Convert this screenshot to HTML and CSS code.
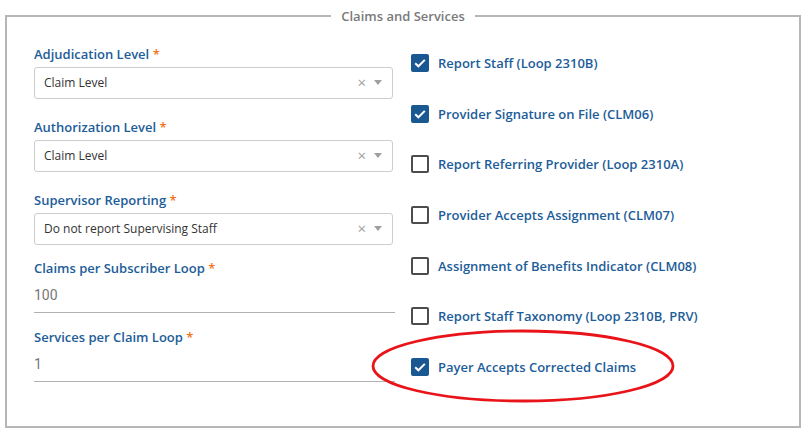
FILE: index.html
```html
<!DOCTYPE html>
<html lang="en">
<head>
  <meta charset="UTF-8">
  <meta name="viewport" content="width=device-width, initial-scale=1.0">
  <title>Claims and Services</title>
  <link rel="stylesheet" href="styles.css">
</head>
<body>
  <div class="page">
    <fieldset class="group">
      <legend>Claims and Services</legend>
      <div class="columns">
        <div class="left-col">
          <div class="field select-field">
            <label>Adjudication Level <span class="req">*</span></label>
            <div class="select">
              <span class="select-value">Claim Level</span>
              <span class="select-clear">&times;</span>
              <span class="select-arrow"></span>
            </div>
          </div>
          <div class="field select-field">
            <label>Authorization Level <span class="req">*</span></label>
            <div class="select">
              <span class="select-value">Claim Level</span>
              <span class="select-clear">&times;</span>
              <span class="select-arrow"></span>
            </div>
          </div>
          <div class="field select-field last">
            <label>Supervisor Reporting <span class="req">*</span></label>
            <div class="select">
              <span class="select-value">Do not report Supervising Staff</span>
              <span class="select-clear">&times;</span>
              <span class="select-arrow"></span>
            </div>
          </div>
          <div class="field text-field">
            <label>Claims per Subscriber Loop <span class="req">*</span></label>
            <input type="text" value="100">
          </div>
          <div class="field text-field">
            <label>Services per Claim Loop <span class="req">*</span></label>
            <input type="text" value="1">
          </div>
        </div>

        <div class="right-col">
          <label class="check checked"><span class="box"><svg viewBox="0 0 18 18"><path d="M4.2 9.2l3.2 3.1 6.4-6.4" /></svg></span>Report Staff (Loop 2310B)</label>
          <label class="check checked"><span class="box"><svg viewBox="0 0 18 18"><path d="M4.2 9.2l3.2 3.1 6.4-6.4" /></svg></span>Provider Signature on File (CLM06)</label>
          <label class="check"><span class="box"></span>Report Referring Provider (Loop 2310A)</label>
          <label class="check"><span class="box"></span>Provider Accepts Assignment (CLM07)</label>
          <label class="check"><span class="box"></span>Assignment of Benefits Indicator (CLM08)</label>
          <label class="check"><span class="box"></span>Report Staff Taxonomy (Loop 2310B, PRV)</label>
          <label class="check checked"><span class="box"><svg viewBox="0 0 18 18"><path d="M4.2 9.2l3.2 3.1 6.4-6.4" /></svg></span>Payer Accepts Corrected Claims</label>
        </div>
      </div>
    </fieldset>

    <svg class="highlight" width="308" height="76" viewBox="0 0 308 76">
      <ellipse cx="154" cy="38" rx="150" ry="35" />
    </svg>
  </div>
</body>
</html>
```

FILE: styles.css
```css
body {
  margin: 0;
  padding: 0;
  font-family: "Open Sans", Arial, sans-serif;
  background: #fff;
}

.page {
  position: relative;
  padding: 7px 6px 6px 5px;
}

.group {
  margin: 0;
  border: 2px solid #b6b6b6;
  padding: 20px 27px 40px 27px;
  height: 421px;
  box-sizing: border-box;
}

.group legend {
  margin: 0 auto;
  padding: 0 10px;
  font-size: 13px;
  font-weight: 600;
  line-height: 18px;
  color: #7a7a7a;
}

.columns {
  display: flex;
  gap: 16px;
}

.left-col {
  width: 361px;
}

.field label {
  display: block;
  font-size: 13px;
  font-weight: 600;
  line-height: 18px;
  color: #1d5d99;
}

.req {
  color: #f0731e;
}

.select-field {
  margin-bottom: 19.5px;
}

.select-field.last {
  margin-bottom: 14.5px;
}

.select {
  display: flex;
  align-items: center;
  width: 359px;
  height: 31.6px;
  margin-top: 4px;
  box-sizing: border-box;
  border: 1px solid #cdcdcd;
  border-radius: 3px;
  padding: 0 10px 0 9px;
}

.select-value {
  flex: 1;
  font-size: 12px;
  color: #333;
}

.select-clear {
  color: #a0a0a0;
  font-size: 15px;
  line-height: 1;
  margin-right: 8px;
}

.select-arrow {
  width: 0;
  height: 0;
  border-left: 4.5px solid transparent;
  border-right: 4.5px solid transparent;
  border-top: 5px solid #a0a0a0;
}

.text-field {
  margin-bottom: 15.5px;
}

.text-field input {
  display: block;
  width: 361px;
  height: 35.5px;
  box-sizing: border-box;
  border: none;
  border-bottom: 1px solid #b0b0b0;
  padding: 0;
  margin: 0;
  font-family: Roboto, Arial, sans-serif;
  font-size: 14px;
  color: #777;
  outline: none;
}

.right-col {
  display: flex;
  flex-direction: column;
  gap: 32.67px;
  padding-top: 9px;
}

.check {
  display: flex;
  align-items: center;
  height: 18px;
  font-size: 13px;
  font-weight: 600;
  color: #1d5d99;
  white-space: nowrap;
}

.box {
  width: 18px;
  height: 18px;
  box-sizing: border-box;
  border: 2px solid #4d4d4d;
  border-radius: 2px;
  margin-right: 9px;
  flex-shrink: 0;
}

.check.checked .box {
  background: #1a5892;
  border-color: #1a5892;
}

.box svg {
  display: block;
  width: 18px;
  height: 18px;
  margin: -2px;
}

.box path {
  fill: none;
  stroke: #fff;
  stroke-width: 2;
}

.highlight {
  position: absolute;
  left: 369px;
  top: 328px;
}

.highlight ellipse {
  fill: none;
  stroke: #e8141a;
  stroke-width: 2.8;
}
```
